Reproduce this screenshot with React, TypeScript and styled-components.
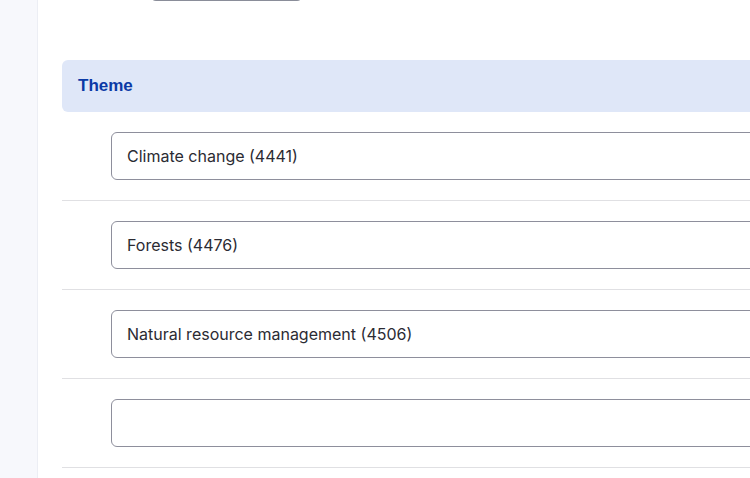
import React from 'react';
import styled, { createGlobalStyle } from 'styled-components';

const themes = [
  'Climate change (4441)',
  'Forests (4476)',
  'Natural resource management (4506)',
  '',
];

export default function App() {
  return (
    <>
      <GlobalStyle />
      <Layout>
        <Sidebar />
        <Main>
          <TopButton />
          <Section>
            <SectionHeader>Theme</SectionHeader>
            {themes.map((label, i) => (
              <Row key={i}>
                <Field defaultValue={label} />
              </Row>
            ))}
          </Section>
        </Main>
      </Layout>
    </>
  );
}

const GlobalStyle = createGlobalStyle`
  html, body {
    margin: 0;
    padding: 0;
    overflow: hidden;
    background: #fff;
  }
  body {
    font-family: Inter, "Liberation Sans", sans-serif;
  }
`;

const Layout = styled.div`
  display: flex;
  width: 100vw;
  height: 478px;
  overflow: hidden;
`;

const Sidebar = styled.div`
  flex: 0 0 37px;
  background: #f7f8fc;
  border-right: 1px solid #eceef4;
`;

const Main = styled.div`
  flex: 1;
  min-width: 0;
  padding-left: 24px;
  display: flex;
  flex-direction: column;
`;

const TopButton = styled.div`
  width: 153px;
  height: 40px;
  margin: -39px 0 0 88px;
  border: 1px solid #8a8d99;
  border-top: none;
  border-radius: 0 0 6px 6px;
  box-sizing: border-box;
`;

const Section = styled.div`
  margin-top: 59px;
  width: 860px;
`;

const SectionHeader = styled.div`
  height: 52px;
  display: flex;
  align-items: center;
  padding-left: 16px;
  background: #dfe7f8;
  border-radius: 6px 0 0 6px;
  color: #0b3aa6;
  font-family: "Liberation Sans", Arial, sans-serif;
  font-weight: 700;
  font-size: 17px;
`;

const Row = styled.div`
  padding: 20px 0 20px 49px;
  border-bottom: 1px solid #e0e0e3;
`;

const Field = styled.input`
  display: block;
  width: 100%;
  height: 48px;
  box-sizing: border-box;
  padding: 0 15px;
  border: 1px solid #8e8f9c;
  border-radius: 6px;
  font-family: Inter, "Liberation Sans", sans-serif;
  font-size: 16px;
  color: #2b2b33;
  background: #fff;
  outline: none;
`;
